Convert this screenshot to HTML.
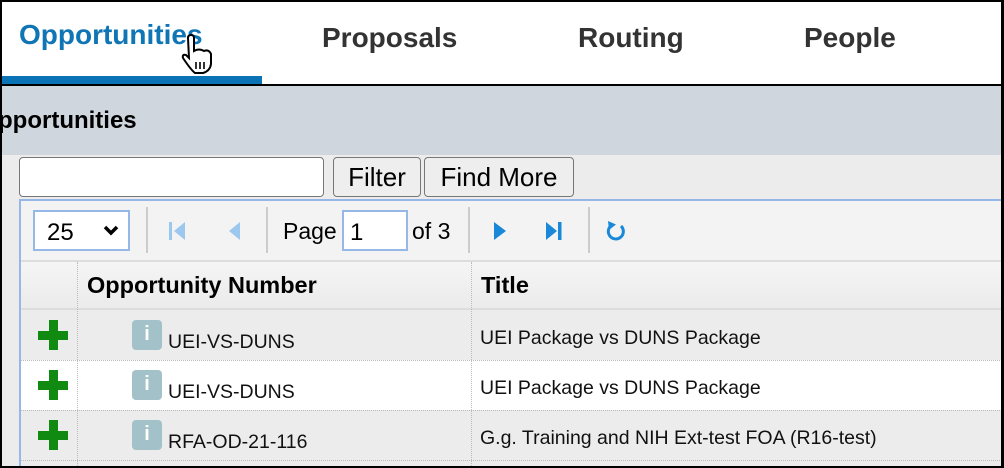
<!DOCTYPE html>
<html><head><style>
*{margin:0;padding:0;box-sizing:border-box}
body{width:1004px;height:468px;overflow:hidden;background:#000;font-family:"Liberation Sans",Arial,sans-serif;position:relative}
.a{position:absolute}
#frame{left:2px;top:2px;width:999px;height:464px;background:#ececec;overflow:hidden}
.tab{position:absolute;top:17px;font-weight:bold;font-size:28px;color:#333}
.cell{position:absolute;font-size:19.5px;color:#111}
.plus{position:absolute;width:30px;height:30px}
.plus:before{content:"";position:absolute;left:11px;top:0;width:9px;height:30px;background:#118a11}
.plus:after{content:"";position:absolute;left:0;top:11px;width:30px;height:9px;background:#118a11}
.info{position:absolute;width:30px;height:30px;background:#a3c1c8;border-radius:4px;color:#fff;font-weight:bold;font-size:20px;text-align:center;line-height:28px}
.dh{position:absolute;left:0;width:999px;border-top:1px dotted #bbb}
</style></head><body>
<div id="frame" class="a">
  <div class="a" style="left:0;top:0;width:999px;height:82px;background:#fff"></div>
  <div class="tab" style="left:17px;color:#0f75b4">Opportunities</div>
  <div class="tab" style="left:320px;top:20px">Proposals</div>
  <div class="tab" style="left:576px;top:20px">Routing</div>
  <div class="tab" style="left:802px;top:20px">People</div>
  <div class="a" style="left:0;top:74px;width:260px;height:8px;background:#0a73b5"></div>
  <div class="a" style="left:0;top:82px;width:999px;height:2px;background:#000"></div>
  <div class="a" style="left:0;top:84px;width:999px;height:69px;background:#cfd6dd"></div>
  <div class="a" style="left:-4px;top:105px;font-weight:bold;font-size:24px;color:#000">pportunities</div>
  <div class="a" style="left:17px;top:155px;width:305px;height:40px;background:#fff;border:1px solid #777;border-radius:4px"></div>
  <div class="a" style="left:331px;top:155px;width:88px;height:40px;background:#eee;border:1px solid #777;border-radius:4px;font-size:26px;text-align:center;line-height:38px">Filter</div>
  <div class="a" style="left:422px;top:155px;width:150px;height:40px;background:#eee;border:1px solid #777;border-radius:4px;font-size:26px;text-align:center;line-height:38px">Find More</div>
  <div class="a" style="left:17px;top:197px;width:990px;height:270px;background:#f3f3f3;border-left:2px solid #95b8e7;border-top:2px solid #95b8e7"></div>
  <div class="a" style="left:31px;top:208px;width:97px;height:41px;background:#fff;border:2px solid #95b8e7;font-size:24px;padding:7px 0 0 12px">25<svg class="a" style="left:68px;top:13px" width="16" height="12"><path d="M2 2 L8 8 L14 2" fill="none" stroke="#000" stroke-width="3.5"/></svg></div>
  <div class="a" style="left:144px;top:205px;width:2px;height:46px;background:#ccc"></div>
  <div class="a" style="left:264px;top:205px;width:2px;height:46px;background:#ccc"></div>
  <div class="a" style="left:466px;top:205px;width:2px;height:46px;background:#ccc"></div>
  <div class="a" style="left:586px;top:205px;width:2px;height:46px;background:#ccc"></div>
  <svg class="a" style="left:165px;top:218px" width="90" height="22"><g fill="#9cc8f0"><rect x="2" y="2" width="3" height="18"/><path d="M18 2 L7 11 L18 20Z"/><path d="M73 2 L62 11 L73 20Z"/></g></svg>
  <div class="a" style="left:281px;top:216px;font-size:23px">Page</div>
  <div class="a" style="left:340px;top:208px;width:66px;height:41px;background:#fff;border:2px solid #95b8e7;font-size:24px;padding:7px 0 0 6px">1</div>
  <div class="a" style="left:410px;top:216px;font-size:23px">of 3</div>
  <svg class="a" style="left:488px;top:218px" width="140" height="24"><g fill="#1a88d8"><path d="M4 2 L16 11 L4 20Z"/><path d="M56 2 L67 11 L56 20Z"/><rect x="68" y="2" width="3.5" height="18"/></g><path d="M131 6 A7.5 7.5 0 1 1 123 4.5" fill="none" stroke="#1a88d8" stroke-width="3"/><path d="M118 1 L126 4.5 L119 10Z" fill="#1a88d8"/></svg>
  <div class="a" style="left:19px;top:258px;width:990px;height:50px;background:linear-gradient(#f5f5f5,#ebebeb);border-top:2px solid #ddd;border-bottom:2px solid #ddd"></div>
  <div class="a" style="left:85px;top:270px;font-weight:bold;font-size:23.5px">Opportunity Number</div>
  <div class="a" style="left:479px;top:270px;font-weight:bold;font-size:23.5px">Title</div>
  <div class="a" style="left:19px;top:308px;width:990px;height:50px;background:#ececec"></div>
  <div class="a" style="left:19px;top:358px;width:990px;height:50px;background:#fff"></div>
  <div class="a" style="left:19px;top:408px;width:990px;height:56px;background:#ececec"></div>
  <div class="dh" style="top:358px;left:19px"></div>
  <div class="dh" style="top:408px;left:19px"></div>
  <div class="dh" style="top:458px;left:19px"></div>
  <div class="a" style="left:75px;top:260px;height:210px;border-left:1px dotted #bbb"></div>
  <div class="a" style="left:469px;top:260px;height:210px;border-left:1px dotted #bbb"></div>
  <div class="plus" style="left:36px;top:318px"></div>
  <div class="plus" style="left:36px;top:368px"></div>
  <div class="plus" style="left:36px;top:418px"></div>
  <div class="info" style="left:130px;top:318px">i</div>
  <div class="info" style="left:130px;top:368px">i</div>
  <div class="info" style="left:130px;top:418px">i</div>
  <div class="cell" style="left:166px;top:329px">UEI-VS-DUNS</div>
  <div class="cell" style="left:166px;top:379px">UEI-VS-DUNS</div>
  <div class="cell" style="left:166px;top:429px">RFA-OD-21-116</div>
  <div class="cell" style="left:478px;top:325px">UEI Package vs DUNS Package</div>
  <div class="cell" style="left:478px;top:375px">UEI Package vs DUNS Package</div>
  <div class="cell" style="left:478px;top:425px">G.g. Training and NIH Ext-test FOA (R16-test)</div>
  <svg class="a" style="left:178px;top:32px" width="36" height="42"><path d="M8 4 Q8 1 11 1 Q14 1 14 4 L14 17 Q19 14 24 17 Q29 15 31 20 L31 30 Q30 37 23 39 L15 39 Q11 36 3 24 Q2 20 6 21 L9 24 L8 4Z" fill="#fff" stroke="#000" stroke-width="2"/><path d="M16 28 V35 M20 28 V35 M24 28 V35" stroke="#000" stroke-width="1.6"/></svg>
</div>
</body></html>
